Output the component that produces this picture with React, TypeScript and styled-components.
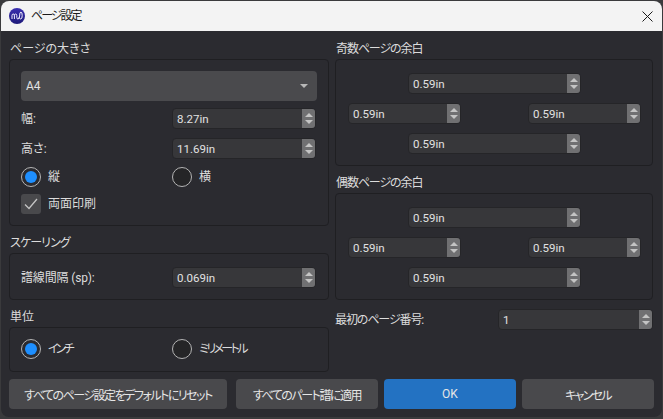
import React from "react";
import styled, { createGlobalStyle } from "styled-components";

const Global = createGlobalStyle`
  html, body { margin: 0; padding: 0; background: #3a3a3c; }
  #root { width: 663px; height: 419px; overflow: hidden; }
  * { box-sizing: border-box; }
`;

const Page = styled.div`
  width: 663px;
  height: 419px;
  padding: 1px 1px 2px 1px;
  font-family: Roboto, "Noto Sans CJK JP", sans-serif;
  font-feature-settings: "palt";
  font-size: 12px;
  color: #e2e2e2;
  white-space: nowrap;
`;

const Window = styled.div`
  height: 100%;
  display: flex;
  flex-direction: column;
  background: #2b2b30;
  border-radius: 8px;
  overflow: hidden;
`;

const TitleBar = styled.div`
  flex: 0 0 30px;
  background: #f3f3f3;
  color: #1a1a1a;
  display: flex;
  align-items: center;
  padding: 0 9px 0 8px;
  gap: 6px;
  font-size: 12px;
`;

const Kana = styled.span<{ $ls: number }>`
  letter-spacing: ${(p) => p.$ls}px;
`;

const TitleText = styled(Kana)`
  flex: 1;
  line-height: 16px;
`;

const Body = styled.div`
  flex: 1;
  display: flex;
  flex-direction: column;
  padding: 10px 8px 8px;
`;

const Columns = styled.div`
  flex: 1;
  display: grid;
  grid-template-columns: 320px 318px;
  column-gap: 6px;
`;

const Column = styled.div`
  display: flex;
  flex-direction: column;
`;

const GroupTitle = styled.div<{ $h: number }>`
  height: ${(p) => p.$h}px;
  display: flex;
  align-items: flex-end;
  padding: 0 0 2px 1px;
  line-height: 16px;
  color: #dcdcdc;
`;

const Group = styled.div<{ $h: number; $pad: string }>`
  height: ${(p) => p.$h}px;
  padding: ${(p) => p.$pad};
  border: 1px solid #1f1f22;
  border-radius: 4px;
  display: flex;
  flex-direction: column;
`;

const Combo = styled.div`
  height: 30px;
  margin: 0 -1px 7px 0;
  background: #4a4a4d;
  border-radius: 4px;
  display: flex;
  align-items: center;
  justify-content: space-between;
  padding: 0 9px 0 5px;
  font-size: 12px;
`;

const ComboArrow = styled.span`
  width: 0;
  height: 0;
  border-left: 4px solid transparent;
  border-right: 4px solid transparent;
  border-top: 4px solid #b8b8b8;
`;

const FormRow = styled.div<{ $mb?: number }>`
  height: 21px;
  display: flex;
  align-items: center;
  justify-content: space-between;
  margin-bottom: ${(p) => p.$mb ?? 0}px;
`;

const FieldLabel = styled(Kana)`
  line-height: 16px;
  color: #dcdcdc;
`;

const SpinBox = styled.div<{ $w: number }>`
  width: ${(p) => p.$w}px;
  height: 21px;
  display: flex;
  border: 1px solid #252528;
  border-radius: 4px;
  background: #37373a;
  overflow: hidden;
`;

const SpinValue = styled.span`
  flex: 1;
  padding-left: 4px;
  line-height: 20px;
  font-size: 11.5px;
  color: #e2e2e2;
`;

const SpinButtons = styled.span`
  flex: 0 0 13px;
  background: #707072;
  display: flex;
  flex-direction: column;
  align-items: center;
  justify-content: center;
  gap: 3px;
`;

const SpinUp = styled.span`
  width: 0;
  height: 0;
  border-left: 4px solid transparent;
  border-right: 4px solid transparent;
  border-bottom: 4px solid #c4c4c4;
`;

const SpinDown = styled(SpinUp)`
  border-bottom: 0;
  border-top: 4px solid #c4c4c4;
`;

const OptionRow = styled.div<{ $mb?: number }>`
  display: grid;
  grid-template-columns: 151px 1fr;
  margin-bottom: ${(p) => p.$mb ?? 0}px;
`;

const Option = styled.div`
  display: flex;
  align-items: center;
  gap: 7px;
  height: 20px;
  line-height: 16px;
  color: #dcdcdc;
`;

const Radio = styled.span<{ $on?: boolean }>`
  width: 20px;
  height: 20px;
  border-radius: 50%;
  border: 1px solid #b4b4b4;
  background: ${(p) => (p.$on ? "transparent" : "#252527")};
  display: flex;
  align-items: center;
  justify-content: center;
`;

const RadioDot = styled.span`
  width: 12px;
  height: 12px;
  border-radius: 50%;
  background: #1e8fff;
`;

const Check = styled.span`
  width: 20px;
  height: 20px;
  border-radius: 3px;
  background: #49494c;
  display: flex;
  align-items: center;
  justify-content: center;
`;

const MarginGrid = styled.div`
  display: flex;
  flex-direction: column;
  gap: 9px;
`;

const MarginRow = styled.div<{ $spread?: boolean }>`
  display: flex;
  justify-content: ${(p) => (p.$spread ? "space-between" : "center")};
`;

const FirstPage = styled.div`
  margin-top: 9px;
  display: flex;
  align-items: center;
  justify-content: space-between;
`;

const Footer = styled.div`
  display: flex;
  height: 30px;
  margin-top: 7px;
`;

const Button = styled.div<{ $w: number; $ml: number; $primary?: boolean }>`
  width: ${(p) => p.$w}px;
  margin-left: ${(p) => p.$ml}px;
  background: ${(p) => (p.$primary ? "#2372c2" : "#49494c")};
  border-radius: 4px;
  display: flex;
  align-items: center;
  justify-content: center;
  font-size: 12px;
  color: #e6e6e6;
`;

const Spin = ({ value, w }: { value: string; w: number }) => (
  <SpinBox $w={w}>
    <SpinValue>{value}</SpinValue>
    <SpinButtons>
      <SpinUp />
      <SpinDown />
    </SpinButtons>
  </SpinBox>
);

const Margins = () => (
  <MarginGrid>
    <MarginRow><Spin value="0.59in" w={173} /></MarginRow>
    <MarginRow $spread>
      <Spin value="0.59in" w={113} />
      <Spin value="0.59in" w={113} />
    </MarginRow>
    <MarginRow><Spin value="0.59in" w={173} /></MarginRow>
  </MarginGrid>
);

const Logo = () => (
  <svg width="16" height="16" viewBox="0 0 16 16">
    <defs>
      <linearGradient id="lg" x1="0" y1="0" x2="0" y2="1">
        <stop offset="0" stopColor="#3a2fb0" />
        <stop offset="1" stopColor="#1e1a7a" />
      </linearGradient>
    </defs>
    <circle cx="8" cy="8" r="8" fill="url(#lg)" />
    <path
      d="M3 11V7.5Q3 6 4.2 6T5.4 7.5V11M5.4 7.5Q5.4 6 6.6 6T7.8 7.5V9.5Q7.8 11 9 11T10.6 8Q10.6 4 11.9 4T13.2 7.5Q13.2 11 11.8 11T10 9"
      fill="none"
      stroke="#f2f0ff"
      strokeWidth="1"
    />
  </svg>
);

export default function App() {
  return (
    <Page>
      <Global />
      <Window>
        <TitleBar>
          <Logo />
          <TitleText $ls={-2}>ページ設定</TitleText>
          <svg width="11" height="11" viewBox="0 0 11 11">
            <path d="M.5.5l10 10M10.5.5l-10 10" stroke="#1a1a1a" strokeWidth="1" fill="none" />
          </svg>
        </TitleBar>
        <Body>
          <Columns>
            <Column>
              <GroupTitle $h={18}>ページの大きさ</GroupTitle>
              <Group $h={167} $pad="11px 12px 0 11px">
                <Combo>
                  <span>A4</span>
                  <ComboArrow />
                </Combo>
                <FormRow $mb={9}>
                  <FieldLabel $ls={0}>幅:</FieldLabel>
                  <Spin value="8.27in" w={144} />
                </FormRow>
                <FormRow $mb={8}>
                  <FieldLabel $ls={0}>高さ:</FieldLabel>
                  <Spin value="11.69in" w={144} />
                </FormRow>
                <OptionRow $mb={7}>
                  <Option><Radio $on><RadioDot /></Radio>縦</Option>
                  <Option><Radio />横</Option>
                </OptionRow>
                <Option>
                  <Check>
                    <svg width="14" height="12" viewBox="0 0 14 12">
                      <path d="M1 6.5l4 4L13 1" stroke="#c4c4c4" strokeWidth="1.3" fill="none" />
                    </svg>
                  </Check>
                  両面印刷
                </Option>
              </Group>
              <GroupTitle $h={27}><Kana $ls={-0.9}>スケーリング</Kana></GroupTitle>
              <Group $h={47} $pad="13px 12px 0 11px">
                <FormRow>
                  <FieldLabel $ls={-0.15}>譜線間隔 (sp):</FieldLabel>
                  <Spin value="0.069in" w={144} />
                </FormRow>
              </Group>
              <GroupTitle $h={27}>単位</GroupTitle>
              <Group $h={45} $pad="11px 12px 0 11px">
                <OptionRow>
                  <Option><Radio $on><RadioDot /></Radio><Kana $ls={-2.8}>インチ</Kana></Option>
                  <Option><Radio /><Kana $ls={-2.6}>ミリメートル</Kana></Option>
                </OptionRow>
              </Group>
            </Column>
            <Column>
              <GroupTitle $h={18}><Kana $ls={-1.1}>奇数ページの余白</Kana></GroupTitle>
              <Group $h={107} $pad="13px 11px 0 12px">
                <Margins />
              </Group>
              <GroupTitle $h={27}><Kana $ls={-1.1}>偶数ページの余白</Kana></GroupTitle>
              <Group $h={107} $pad="13px 11px 0 12px">
                <Margins />
              </Group>
              <FirstPage>
                <FieldLabel $ls={-1.1}>最初のページ番号:</FieldLabel>
                <Spin value="1" w={155} />
              </FirstPage>
            </Column>
          </Columns>
          <Footer>
            <Button $w={218} $ml={0}><Kana $ls={-1.5}>すべてのページ設定をデフォルトにリセット</Kana></Button>
            <Button $w={142} $ml={9}><Kana $ls={-1.45}>すべてのパート譜に適用</Kana></Button>
            <Button $w={132} $ml={6} $primary>OK</Button>
            <Button $w={132} $ml={6}><Kana $ls={-1.7}>キャンセル</Kana></Button>
          </Footer>
        </Body>
      </Window>
    </Page>
  );
}
